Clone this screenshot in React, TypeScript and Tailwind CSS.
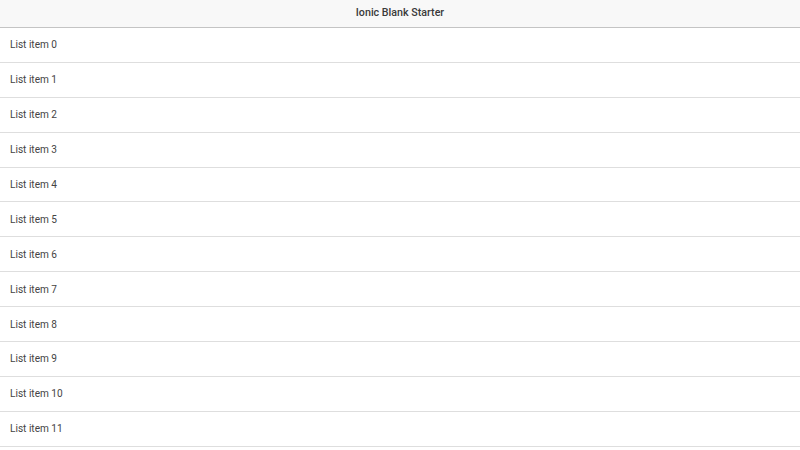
export default function App() {
  const items = Array.from({ length: 12 }, (_, i) => `List item ${i}`);
  return (
    <div className="flex h-[450px] w-[800px] flex-col overflow-hidden bg-white font-['Roboto',sans-serif]">
      <header className="flex h-[28px] shrink-0 items-center justify-center border-b border-[#c4c4c4] bg-[#f8f8f8]">
        <h1 className="text-[10.7px] font-medium text-[#3a3a3a]">Ionic Blank Starter</h1>
      </header>
      <ul className="flex flex-col">
        {items.map((item) => (
          <li
            key={item}
            className="flex h-[34.9px] shrink-0 items-center border-b border-[#dedede] pl-[10px] text-[10.1px] text-[#444]"
          >
            {item}
          </li>
        ))}
      </ul>
    </div>
  );
}
